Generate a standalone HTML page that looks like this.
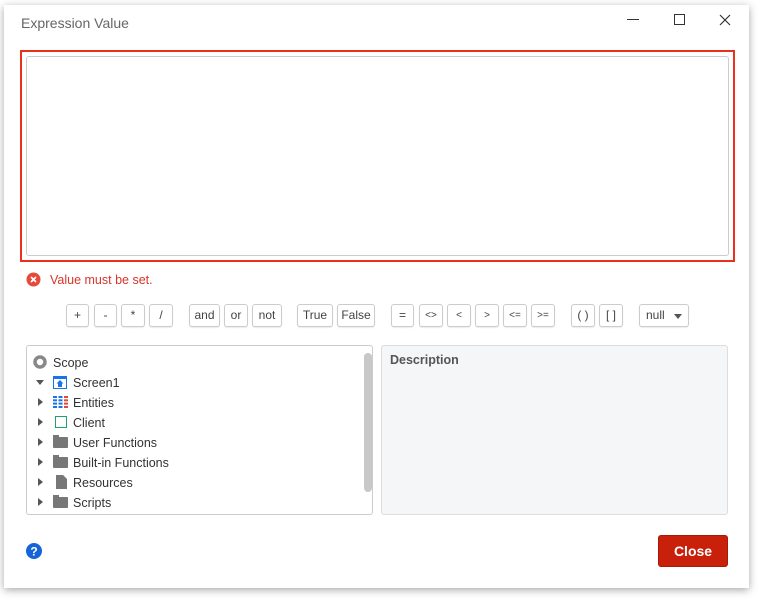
<!DOCTYPE html>
<html><head><meta charset="utf-8"><style>
*{box-sizing:border-box;margin:0;padding:0}
body{width:764px;height:603px;background:#fff;position:relative;overflow:hidden;font-family:"Liberation Sans",sans-serif;}
.dlg{position:absolute;left:4px;top:5px;width:745px;height:583px;background:#fff;box-shadow:0 2px 8px rgba(0,0,0,.35);}
.a{position:absolute}
.title{left:21px;top:15px;font-size:14px;color:#666;}
.btn{position:absolute;top:304px;height:23px;border:1px solid #ccc;border-radius:3px;background:#fff;font-size:12px;color:#444;text-align:center;line-height:21px;box-shadow:0 1px 1px rgba(0,0,0,.08)}
.tree div{position:absolute;left:0;font-size:12.5px;color:#333;height:20px;line-height:20px}
.arr{position:absolute;left:12px;top:6px;width:0;height:0;border-top:4px solid transparent;border-bottom:4px solid transparent;border-left:5px solid #555}
.fold{position:absolute;left:27px;top:5px;width:15px;height:11px;background:#777;border-radius:1px}
.fold:before{content:"";position:absolute;left:0;top:-2px;width:6px;height:3px;background:#777}
.lbl{position:absolute;left:47px;top:1px;white-space:nowrap}
</style></head><body>
<div class="dlg"></div>
<div class="a title">Expression Value</div>
<div class="a" style="left:627px;top:19px;width:12px;height:1px;background:#333"></div>
<div class="a" style="left:674px;top:14px;width:11px;height:11px;border:1px solid #333"></div>
<svg class="a" style="left:719px;top:14px" width="12" height="12"><path d="M1 1L11 11M11 1L1 11" stroke="#333" stroke-width="1.2"/></svg>
<div class="a" style="left:20px;top:50px;width:715px;height:212px;border:2px solid #e8321c"></div>
<div class="a" style="left:26px;top:56px;width:703px;height:200px;border:1px solid #ccc;border-radius:3px"></div>
<svg class="a" style="left:26px;top:272px" width="15" height="15"><circle cx="7.5" cy="7.5" r="7" fill="#e54b3b"/><path d="M5 5L10 10M10 5L5 10" stroke="#fff" stroke-width="1.6"/></svg>
<div class="a" style="left:50px;top:273px;font-size:12.5px;color:#d9342b">Value must be set.</div>
<div class="btn" style="left:66px;width:23px">+</div>
<div class="btn" style="left:94px;width:23px">-</div>
<div class="btn" style="left:121px;width:24px">*</div>
<div class="btn" style="left:149px;width:24px">/</div>
<div class="btn" style="left:189px;width:31px">and</div>
<div class="btn" style="left:224px;width:24px">or</div>
<div class="btn" style="left:252px;width:30px">not</div>
<div class="btn" style="left:297px;width:36px">True</div>
<div class="btn" style="left:337px;width:38px">False</div>
<div class="btn" style="left:391px;width:23px">=</div>
<div class="btn" style="left:419px;width:24px;font-size:10px">&lt;&gt;</div>
<div class="btn" style="left:447px;width:24px;font-size:10px">&lt;</div>
<div class="btn" style="left:475px;width:24px;font-size:10px">&gt;</div>
<div class="btn" style="left:503px;width:24px;font-size:10px">&lt;=</div>
<div class="btn" style="left:531px;width:24px;font-size:10px">&gt;=</div>
<div class="btn" style="left:571px;width:24px">( )</div>
<div class="btn" style="left:599px;width:24px">[ ]</div>
<div class="btn" style="left:639px;width:50px;text-align:left;padding-left:6px">null<span style="position:absolute;right:6px;top:9px;border-left:4px solid transparent;border-right:4px solid transparent;border-top:5px solid #555"></span></div>
<div class="a" style="left:26px;top:345px;width:347px;height:170px;border:1px solid #ccc;border-radius:3px"></div>
<div class="a" style="left:364px;top:353px;width:8px;height:139px;background:#c8c8c8;border-radius:4px"></div>
<div class="a tree" style="left:26px;top:352px;width:330px;height:160px">
<div style="top:0"><svg class="a" style="left:7px;top:3px" width="14" height="14"><circle cx="7" cy="7" r="5" fill="none" stroke="#888" stroke-width="3.5"/></svg><span class="lbl" style="left:27px">Scope</span></div>
<div style="top:20px"><span class="a" style="left:10px;top:8px;border-left:4px solid transparent;border-right:4px solid transparent;border-top:5px solid #555"></span><svg class="a" style="left:27px;top:4px" width="14" height="13"><rect x=".5" y=".5" width="13" height="12" fill="#fff" stroke="#1a73e8"/><rect x="1" y="1" width="12" height="2" fill="#1a73e8"/><path d="M7 4L3.5 7.5H5V11H9V7.5H10.5Z" fill="#1a73e8"/></svg><span class="lbl">Screen1</span></div>
<div style="top:40px"><span class="arr"></span><svg class="a" style="left:27px;top:4px" width="15" height="12"><g fill="#1a73e8"><rect x="0" y="0" width="4" height="2"/><rect x="0" y="3.3" width="4" height="2"/><rect x="0" y="6.6" width="4" height="2"/><rect x="0" y="10" width="4" height="2"/><rect x="5.5" y="0" width="4" height="2"/><rect x="5.5" y="3.3" width="4" height="2"/><rect x="5.5" y="6.6" width="4" height="2"/><rect x="5.5" y="10" width="4" height="2"/></g><g fill="#e04b3a"><rect x="11" y="0" width="4" height="2"/><rect x="11" y="3.3" width="4" height="2"/><rect x="11" y="6.6" width="4" height="2"/><rect x="11" y="10" width="4" height="2"/></g></svg><span class="lbl">Entities</span></div>
<div style="top:60px"><span class="arr"></span><span class="a" style="left:29px;top:4px;width:12px;height:12px;border:1px solid #1aa36b"></span><span class="lbl">Client</span></div>
<div style="top:80px"><span class="arr"></span><span class="fold"></span><span class="lbl">User Functions</span></div>
<div style="top:100px"><span class="arr"></span><span class="fold"></span><span class="lbl">Built-in Functions</span></div>
<div style="top:120px"><span class="arr"></span><svg class="a" style="left:30px;top:3px" width="11" height="14"><path d="M0 0H7L11 4V14H0Z" fill="#777"/></svg><span class="lbl">Resources</span></div>
<div style="top:140px"><span class="arr"></span><span class="fold"></span><span class="lbl">Scripts</span></div>
</div>
<div class="a" style="left:381px;top:345px;width:347px;height:170px;border:1px solid #ddd;border-radius:3px;background:#f5f6f8"></div>
<div class="a" style="left:390px;top:353px;font-size:12.5px;font-weight:bold;color:#555">Description</div>
<svg class="a" style="left:26px;top:543px" width="16" height="16"><circle cx="8" cy="8" r="8" fill="#1565d8"/><text x="8" y="12.5" font-size="12" font-weight="bold" fill="#fff" text-anchor="middle" font-family="Liberation Sans">?</text></svg>
<div class="a" style="left:658px;top:535px;width:70px;height:32px;background:#c8200a;border:1px solid #a81a08;border-radius:3px;color:#fff;font-weight:bold;font-size:14px;text-align:center;line-height:30px">Close</div>
</body></html>
